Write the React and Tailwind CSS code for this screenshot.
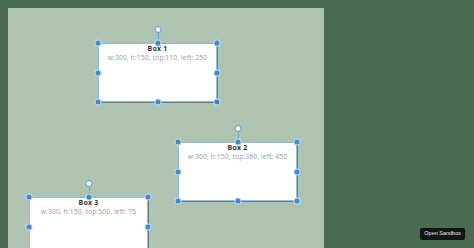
import React from 'react';

const boxes = [
  { id: 1, label: 'Box 1', info: 'w:300, h:150, top:110, left: 250', pos: 'left-[90px] top-[35px]' },
  { id: 2, label: 'Box 2', info: 'w:300, h:150, top:360, left: 450', pos: 'left-[170px] top-[134px]' },
  { id: 3, label: 'Box 3', info: 'w:300, h:150, top:500, left: 75', pos: 'left-[21px] top-[189px]' },
];

const handleSpots = [
  'left-0 top-0',
  'left-1/2 top-0',
  'left-full top-0',
  'left-0 top-1/2',
  'left-full top-1/2',
  'left-0 top-full',
  'left-1/2 top-full',
  'left-full top-full',
];

function Box({ label, info, pos }) {
  return (
    <div className={`absolute ${pos} w-[119px] h-[59px]`}>
      {/* rotate handle */}
      <div className="absolute left-1/2 -top-[14px] w-px h-[14px] bg-[#6aa7d6]" />
      <div className="absolute left-1/2 -top-[17px] -translate-x-1/2 w-[7px] h-[7px] rounded-full bg-[#eaf5fc] border border-[#5b9fd6]" />
      <div className="w-full h-full bg-white border border-[#8fbde2] shadow-[1px_1px_0_#6f7c88] flex flex-col items-center">
        <div className="text-[7px] leading-[9px] font-bold text-[#333] tracking-wide">{label}</div>
        <div className="text-[6.8px] leading-[10px] text-[#9a9a9a] tracking-[0.1px]">{info}</div>
      </div>
      {handleSpots.map((s) => (
        <div
          key={s}
          className={`absolute ${s} -translate-x-1/2 -translate-y-1/2 w-[5px] h-[5px] rounded-full bg-[#3f8ad3] ring-1 ring-[#bfe0f7]`}
        />
      ))}
    </div>
  );
}

export default function App() {
  return (
    <div className="w-[474px] h-[248px] overflow-hidden bg-[#4a6b51] pt-2 pl-2 relative font-['Open_Sans',sans-serif]">
      <div className="relative w-[316px] h-[260px] bg-[#afc4b0]">
        {boxes.map((b) => (
          <Box key={b.id} {...b} />
        ))}
      </div>
      <button className="absolute right-[9px] bottom-[8px] bg-[#131313] text-[#eee] text-[5.5px] leading-none px-[4px] py-[3.5px] rounded-[2px] font-['Liberation_Sans',sans-serif]">
        Open Sandbox
      </button>
    </div>
  );
}
